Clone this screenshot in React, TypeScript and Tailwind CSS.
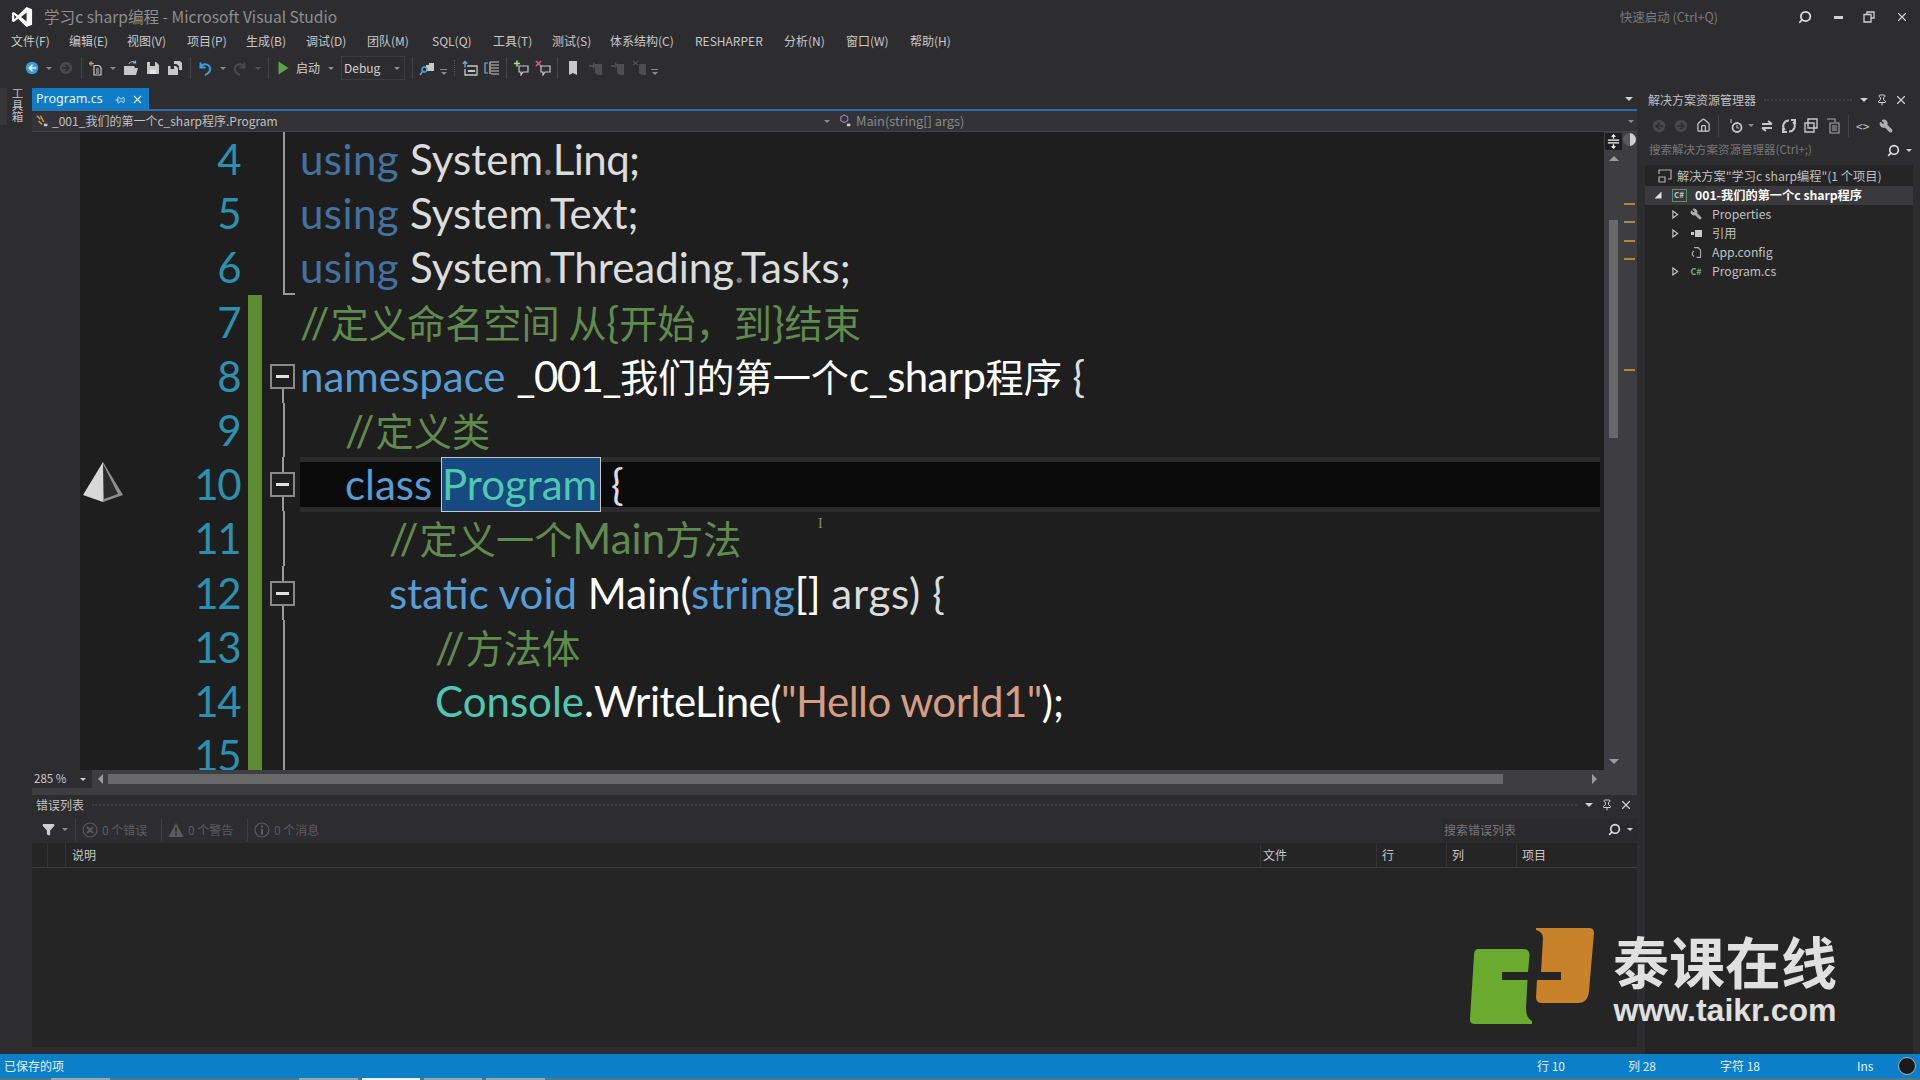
import React from 'react';
import { Search, X, Pin, Filter, Wrench, Home } from 'lucide-react';

const KW = 'text-[#569cd6]';
const DIM = 'text-[#44719f] tracking-[0.4px]';
const TXT = 'text-[#dcdcdc]';
const WHITE = 'text-white';
const GRN = 'text-[#608b4e]';
const TYPE = 'text-[#4ec9b0]';
const STR = 'text-[#d69d85] tracking-[-0.5px]';

type Tok = [string, string, boolean?];

interface CodeLine {
  n: number;
  indent: string;
  gutter: 'line' | 'tick' | 'box' | 'firstbox' | 'none';
  bar: boolean;
  toks: Tok[];
}

const lines: CodeLine[] = [
  { n: 4, indent: 'pl-0', gutter: 'line', bar: false, toks: [['using ', DIM], ['System', TXT], ['.', 'text-[#777777]'], ['Linq;', `${TXT} tracking-[-0.6px]`]] },
  { n: 5, indent: 'pl-0', gutter: 'line', bar: false, toks: [['using ', DIM], ['System', TXT], ['.', 'text-[#777777]'], ['Text;', TXT]] },
  { n: 6, indent: 'pl-0', gutter: 'tick', bar: false, toks: [['using ', DIM], ['System', TXT], ['.', 'text-[#777777]'], ['Threading', TXT], ['.', 'text-[#777777]'], ['Tasks;', TXT]] },
  { n: 7, indent: 'pl-0', gutter: 'none', bar: true, toks: [['//', `${GRN} tracking-[1px]`], ['定义命名空间 从', GRN, true], ['{', GRN], ['开始，到', GRN, true], ['}', GRN], ['结束', GRN, true]] },
  { n: 8, indent: 'pl-0', gutter: 'firstbox', bar: true, toks: [['namespace ', KW], ['_001_', `${WHITE} tracking-[-1.6px]`], ['我们的第一个', WHITE, true], ['c_sharp', `${WHITE} tracking-[-0.6px]`], ['程序', WHITE, true], [' {', TXT]] },
  { n: 9, indent: 'pl-[45px]', gutter: 'line', bar: true, toks: [['//', `${GRN} tracking-[1px]`], ['定义类', GRN, true]] },
  { n: 10, indent: 'pl-[45px]', gutter: 'box', bar: true, toks: [] },
  { n: 11, indent: 'pl-[89px]', gutter: 'line', bar: true, toks: [['//', `${GRN} tracking-[1px]`], ['定义一个', GRN, true], ['Main', GRN], ['方法', GRN, true]] },
  { n: 12, indent: 'pl-[89px]', gutter: 'box', bar: true, toks: [['static void ', KW], ['Main(', WHITE], ['string', KW], ['[] ', WHITE], ['args) {', `${TXT} tracking-[0.7px]`]] },
  { n: 13, indent: 'pl-[135px]', gutter: 'line', bar: true, toks: [['//', `${GRN} tracking-[1px]`], ['方法体', GRN, true]] },
  { n: 14, indent: 'pl-[135px]', gutter: 'line', bar: true, toks: [['Console', TYPE], ['.', WHITE], ['WriteLine(', `${WHITE} tracking-[-0.5px]`], ['"Hello world1"', STR], [');', WHITE]] },
  { n: 15, indent: 'pl-0', gutter: 'line', bar: true, toks: [] },
];

const menus = [
  ['文件(F)', 'w-[58px]'], ['编辑(E)', 'w-[58px]'], ['视图(V)', 'w-[60px]'], ['项目(P)', 'w-[59px]'], ['生成(B)', 'w-[60px]'],
  ['调试(D)', 'w-[61px]'], ['团队(M)', 'w-[65px]'], ['SQL(Q)', 'w-[61px]'], ['工具(T)', 'w-[59px]'], ['测试(S)', 'w-[58px]'],
  ['体系结构(C)', 'w-[85px]'], ['RESHARPER', 'w-[89px]'], ['分析(N)', 'w-[62px]'], ['窗口(W)', 'w-[64px]'], ['帮助(H)', 'w-[50px]'],
];

const Caret = ({ className = '' }: { className?: string }) => (
  <span className={`inline-block w-0 h-0 shrink-0 border-l-[3px] border-r-[3px] border-t-[3px] border-l-transparent border-r-transparent border-t-[#8a8a8a] ${className}`} />
);

const Sep = ({ className = '' }: { className?: string }) => <div className={`w-px h-[22px] shrink-0 bg-[#444447] ${className}`} />;

const Ic = ({ className = '', children }: { className?: string; children: React.ReactNode }) => (
  <svg viewBox="0 0 16 16" className={`w-4 h-4 shrink-0 ${className}`} fill="none">
    {children}
  </svg>
);

const NavCircle = ({ on, dir, className = '' }: { on?: boolean; dir: 'l' | 'r'; className?: string }) => (
  <Ic className={className}>
    <circle cx="8" cy="8" r="6.2" fill={on ? '#3f9bdc' : '#48484b'} />
    <path d={dir === 'l' ? 'M8.5 4.8 5.3 8l3.2 3.2M5.6 8H12' : 'M7.5 4.8 10.7 8l-3.2 3.2M10.4 8H4'} stroke={on ? '#e6f2fb' : '#2d2d30'} strokeWidth="1.6" />
  </Ic>
);

const Overflow = ({ className = '' }: { className?: string }) => (
  <div className={`w-[7px] flex flex-col items-center gap-[2px] shrink-0 ${className}`}>
    <span className="w-[7px] h-px bg-[#8a8a8a]" />
    <Caret />
  </div>
);

const Toolbar = () => (
  <div className="h-[30px] flex items-center pl-[24px] shrink-0">
    <NavCircle on dir="l" />
    <Caret className="ml-[6px]" />
    <NavCircle dir="r" className="ml-[6px]" />
    <Sep className="ml-[7px]" />
    <Ic className="ml-[6px]">
      <path d="M6 5.5h5l2 2V15H6z" stroke="#c8c8c8" strokeWidth="1.2" />
      <path d="M8 9h3M8 11h3M8 13h3" stroke="#c8c8c8" />
      <path d="M3 1v5M1 3.5h5M1.5 2l3 3M4.500 2l-3 3" stroke="#c9a55c" strokeWidth="0.9" />
    </Ic>
    <Caret className="ml-[6px]" />
    <Ic className="ml-[7px]">
      <path d="M1 6h10l1 2h3l-2 7H1z" fill="#c8c8c8" />
      <path d="M6 4c1-2.500 4-3 6-1.500M12.500 0.500v2.500H10" stroke="#7fb6dc" strokeWidth="1.200" />
    </Ic>
    <Ic className="ml-[6px]">
      <path d="M2 2h9l3 3v9H2z" fill="#c8c8c8" />
      <path d="M5 2h5v4H5z" fill="#2d2d30" />
      <path d="M5 9.500h6V14H5z" fill="#e6e6e6" />
    </Ic>
    <Ic className="ml-[6px]">
      <path d="M1 6h8l2 2v7H1z" fill="#c8c8c8" />
      <path d="M7 1h6l2 2v7h-3V6L9.500 4H7z" fill="#c8c8c8" />
      <path d="M3.500 6H7v3H3.500z" fill="#2d2d30" />
    </Ic>
    <Sep className="ml-[7px]" />
    <Ic className="ml-[6px]">
      <path d="M3.500 2.500v5h5M3.800 7.200C5 5 7.500 3.800 10 4.600c3 1 4 4.400 2.500 6.900C11.500 13.200 9.500 14.500 8 15" stroke="#3f9bdc" strokeWidth="2" />
    </Ic>
    <Caret className="ml-[7px]" />
    <Ic className="ml-[6px]">
      <path d="M12.500 2.500v5h-5M12.200 7.200C11 5 8.500 3.800 6 4.600c-3 1-4 4.400-2.500 6.900C4.500 13.200 6.500 14.500 8 15" stroke="#4a4a4d" strokeWidth="2" />
    </Ic>
    <Caret className="ml-[7px] !border-t-[#555558]" />
    <Sep className="ml-[7px]" />
    <Ic className="ml-[6px]">
      <path d="M3.500 1.500 13.500 8l-10 6.500z" fill="#57a64a" />
    </Ic>
    <span className="ml-[5px] text-[12px] text-[#d0d0d0] w-[26px]">启动</span>
    <Caret className="ml-[6px]" />
    <div className="ml-[7px] w-[64px] h-[24px] flex items-center justify-between pl-[2px] pr-[4px] border border-[#3c3c3f] bg-[#2d2d30] text-[12px] text-[#d0d0d0]">
      <span>Debug</span>
      <Caret />
    </div>
    <Sep className="ml-[7px]" />
    <Ic className="ml-[6px]">
      <path d="M7 5h3V3h5v8H7z" fill="#c8c8c8" />
      <circle cx="5.500" cy="9.500" r="2.500" stroke="#5ba4d8" strokeWidth="1.300" />
      <path d="M3.500 11.500 1 15" stroke="#5ba4d8" strokeWidth="1.600" />
    </Ic>
    <Overflow className="ml-[5px] mt-[8px]" />
    <div className="ml-[7px] h-[16px] border-l border-dotted border-[#555558]" />
    <Ic className="ml-[7px]">
      <path d="M3 1.500v6M0.800 3.800 3 1.500l2.200 2.300" stroke="#6ab0e0" strokeWidth="1.300" />
      <path d="M5 6h10v9H3V9" stroke="#c8c8c8" strokeWidth="1.300" />
      <path d="M6 10h7v2H6z" fill="#c8c8c8" />
    </Ic>
    <Ic className="ml-[6px]">
      <path d="M4 3H1v10h3" stroke="#6ab0e0" strokeWidth="1.200" />
      <path d="M6 2h9M7 5h8M7 8h8M7 11h8M7 14h8M6 2v12" stroke="#c8c8c8" strokeWidth="1.200" />
    </Ic>
    <Sep className="ml-[6px]" />
    <Ic className="ml-[6px]">
      <path d="M1 3.500h6M4 0.500v6" stroke="#a8d8a0" strokeWidth="1.600" />
      <path d="M6 6h9v6h-5l-2 3v-3H6z" stroke="#c8c8c8" strokeWidth="1.200" />
    </Ic>
    <Ic className="ml-[6px]">
      <path d="M1 1l5 5M6 1 1 6" stroke="#e05a7c" strokeWidth="1.600" />
      <path d="M6 6h9v6h-5l-2 3v-3H6z" stroke="#c8c8c8" strokeWidth="1.200" />
    </Ic>
    <Sep className="ml-[6px]" />
    <Ic className="ml-[7px]">
      <path d="M4 1h8v14l-4-2-4 2z" fill="#c8c8c8" />
    </Ic>
    <Ic className="ml-[7px]">
      <path d="M7 4h7v11H10l-3-2z" fill="#4e4e51" />
      <path d="M8 5 5 2v3H1v2h4v3z" fill="#4e4e51" />
    </Ic>
    <Ic className="ml-[6px]">
      <path d="M7 4h7v11H10l-3-2z" fill="#4e4e51" />
      <path d="M1 5h4V2l3 3-3 4V7H1z" fill="#4e4e51" />
    </Ic>
    <Ic className="ml-[6px]">
      <path d="M7 4h7v11H10l-3-2z" fill="#4e4e51" />
      <path d="M1 1l5 4M6 1 1 5" stroke="#4e4e51" strokeWidth="1.500" />
    </Ic>
    <Overflow className="ml-[3px] mt-[8px]" />
  </div>
);

const VsLogo = () => (
  <svg viewBox="0 0 24 24" className="w-[22px] h-[22px] shrink-0" fill="#ffffff" fillRule="evenodd">
    <path d="M17 1 7.800 10.200 3 6.500 1 7.500v9l2 1 4.800-3.700L17 23l6-2.500v-17zM17 7v10l-6-5zM3.500 9.500 6 12l-2.500 2.500z" />
  </svg>
);

const PaneHead = ({ title }: { title: string }) => (
  <div className="flex items-center h-[20px]">
    <span className="text-[12px] text-[#c0c0c0] whitespace-nowrap">{title}</span>
    <div className="flex-1 mx-[8px] border-t-2 border-dotted border-[#3f3f42]" />
    <Caret className="!border-t-[#d0d0d0] !border-l-[4px] !border-r-[4px] !border-t-[4px]" />
    <Pin size={12} className="ml-[8px] text-[#d0d0d0]" />
    <X size={14} className="ml-[6px] text-[#d0d0d0]" />
  </div>
);

const Gutter = ({ kind }: { kind: CodeLine['gutter'] }) => {
  if (kind === 'none') return <div className="w-[38px] shrink-0" />;
  if (kind === 'box' || kind === 'firstbox') {
    return (
      <div className="w-[38px] h-full shrink-0 flex flex-col justify-center pl-[8px]">
        <div className={`h-[15px] w-[14px] shrink-0 ${kind === 'box' ? 'border-r-2 border-[#9a9a9a]' : ''}`} />
        <div className="w-[25px] h-[25px] border-2 border-[#8a8a8a] flex items-center justify-center shrink-0">
          <span className="w-[13px] h-[3px] bg-[#e0e0e0]" />
        </div>
        <div className="flex-1 w-[14px] border-r-2 border-[#9a9a9a]" />
      </div>
    );
  }
  if (kind === 'tick') {
    return <div className="w-[38px] h-full shrink-0 pl-[21px]"><div className="w-[12px] h-full border-l-2 border-b-2 border-[#9a9a9a]" /></div>;
  }
  return <div className="w-[38px] h-full shrink-0 pl-[21px]"><div className="w-[2px] h-full bg-[#9a9a9a]" /></div>;
};

const Tokens = ({ toks }: { toks: Tok[] }) => (
  <span className="whitespace-pre">
    {toks.map(([t, c, cjk], i) => (
      <span key={i} className={cjk ? `${c} text-[38.2px] font-['Noto_Sans_CJK_SC',sans-serif]` : c}>{t}</span>
    ))}
  </span>
);

const Editor = () => (
  <div className="relative h-[638px] flex bg-[#1e1e1e] overflow-hidden shrink-0">
    <div className="w-[48px] bg-[#2d2d30] shrink-0" />
    <div className="flex-1 flex flex-col min-w-0">
      {lines.map(l => (
        <div key={l.n} className="h-[54.2px] shrink-0 flex items-center text-[42px] leading-none font-['Lato','Noto_Sans_CJK_SC',sans-serif]">
          <div className="w-[160px] text-right text-[#2b91af] tracking-[-1.5px] shrink-0">{l.n}</div>
          <div className="w-[8px] shrink-0" />
          <div className={`w-[14px] h-full shrink-0 ${l.bar ? 'bg-[#5d8a33]' : ''}`} />
          <Gutter kind={l.gutter} />
          {l.n === 10 ? (
            <div className={`flex-1 h-[55px] flex items-center bg-[#0b0b0b] border-y-[5px] border-[#2b2b2c] mr-[4px] ${l.indent}`}>
              <span className={`${KW} whitespace-pre w-[96px]`}>class</span>
              <span className={`h-[55px] flex items-center shrink-0 w-[160px] bg-[#174a80] border border-[#c8c8c8] ${TYPE}`}>Program</span>
              <span className={`${TXT} ml-[10px]`}>{'{'}</span>
            </div>
          ) : (
            <div className={`flex-1 ${l.indent}`}><Tokens toks={l.toks} /></div>
          )}
        </div>
      ))}
    </div>
    <div className="w-[33px] shrink-0 bg-[#3e3e42] flex">
      <div className="w-[20px] flex flex-col items-center">
        <div className="w-[17px] h-[17px] mt-px bg-[#1e1e1e] flex items-center justify-center">
          <svg viewBox="0 0 16 16" className="w-[15px] h-[15px]" fill="none" stroke="#ffffff" strokeWidth="1.300">
            <path d="M2 6.500h12M2 9.500h12M8 1v4M8 11v4" />
            <path d="M6 3l2-2 2 2M6 13l2 2 2-2" />
          </svg>
        </div>
        <span className="mt-[6px] w-0 h-0 border-l-[5px] border-r-[5px] border-b-[5px] border-l-transparent border-r-transparent border-b-[#9a9a9a]" />
        <div className="mt-[59px] w-[9px] h-[218px] bg-[#686868]" />
        <span className="mt-auto mb-[6px] w-0 h-0 border-l-[5px] border-r-[5px] border-t-[5px] border-l-transparent border-r-transparent border-t-[#9a9a9a]" />
      </div>
      <div className="flex-1 flex flex-col items-center pr-[1px]">
        <span className="mt-[1px] w-[13px] h-[13px] rounded-full bg-[linear-gradient(90deg,#5a5a5a_50%,#d0d0d0_50%)]" />
        <span className="mt-[57px] w-[11px] h-[2px] bg-[#b5862a]" />
        <span className="mt-[16px] w-[11px] h-[2px] bg-[#a08a60]" />
        <span className="mt-[17px] w-[11px] h-[2px] bg-[#b5862a]" />
        <span className="mt-[16px] w-[11px] h-[2px] bg-[#b5862a]" />
        <span className="mt-[109px] w-[11px] h-[2px] bg-[#b5862a]" />
      </div>
    </div>
    {/* pyramid glyph in the margin */}
    <svg viewBox="0 0 40 40" className="absolute left-[51px] top-[330px] w-[40px] h-[40px]">
      <path d="M20 0 0 33l20 7z" fill="#d8d8d8" />
      <path d="M20 0 40 33 20 40z" fill="#8f8f8f" />
      <path d="M20 2 35 32 21 37z" fill="#2b2b2b" />
    </svg>
    <span className="absolute left-[786px] top-[381px] text-[14px] text-[#888888] font-['Liberation_Serif',serif]">I</span>
  </div>
);

const ErrChip = ({ icon, label, w }: { icon: React.ReactNode; label: string; w: string }) => (
  <div className={`flex items-center h-[22px] ${w} pl-[6px] border-r border-[#3f3f42] text-[12px] text-[#5c5c5f]`}>
    {icon}
    <span className="ml-[4px]">{label}</span>
  </div>
);

const ErrorList = () => (
  <div className="flex-1 flex flex-col min-h-0">
    <div className="h-[21px] pl-[4px] pr-[4px] pb-[2px] flex items-center shrink-0"><div className="flex-1"><PaneHead title="错误列表" /></div></div>
    <div className="h-[27px] flex items-center shrink-0 pl-[10px]">
      <Filter size={13} className="text-[#d0d0d0] fill-[#d0d0d0]" />
      <Caret className="ml-[7px] mr-[7px]" />
      <div className="w-px h-[22px] bg-[#3f3f42]" />
      <ErrChip w="w-[86px]" label="0 个错误" icon={<Ic><circle cx="8" cy="8" r="7" stroke="#5c5c5f" strokeWidth="1.200" /><path d="M5 5l6 6M11 5l-6 6" stroke="#5c5c5f" strokeWidth="1.800" /></Ic>} />
      <ErrChip w="w-[86px]" label="0 个警告" icon={<Ic><path d="M8 1 15.500 15H.5z" fill="#5c5c5f" /><path d="M8 5.500v5M8 11.500v2" stroke="#2d2d30" strokeWidth="1.600" /></Ic>} />
      <ErrChip w="w-[86px] !border-r-0" label="0 个消息" icon={<Ic><circle cx="8" cy="8" r="7" stroke="#5c5c5f" strokeWidth="1.200" /><path d="M8 3.500v2M8 7v5.500" stroke="#5c5c5f" strokeWidth="2" /></Ic>} />
      <div className="ml-auto w-[195px] h-[24px] flex items-center pl-[2px] pr-[4px] text-[12px] text-[#777777] bg-[#2a2a2c]">
        <span>搜索错误列表</span>
        <Search size={13} strokeWidth={3} className="ml-auto text-[#e0e0e0] -scale-x-100" />
        <Caret className="ml-[6px] !border-t-[#d0d0d0]" />
      </div>
    </div>
    <div className="h-[25px] flex items-center bg-[#252526] border-b border-[#3f3f42] text-[12px] text-[#c8c8c8] shrink-0">
      <div className="w-[16px] h-full border-r border-[#333336]" />
      <div className="w-[18px] h-full border-r border-[#333336]" />
      <div className="w-[1195px] h-full pl-[6px] flex items-center border-r border-[#333336]">说明</div>
      <div className="w-[116px] h-full pl-[2px] flex items-center border-r border-[#333336]">文件</div>
      <div className="w-[70px] h-full pl-[5px] flex items-center border-r border-[#333336]">行</div>
      <div className="w-[70px] h-full pl-[5px] flex items-center border-r border-[#333336]">列</div>
      <div className="flex-1 h-full pl-[5px] flex items-center">项目</div>
    </div>
    <div className="flex-1 bg-[#252526]" />
  </div>
);

const TreeRow = ({ pl, arrow, icon, label, sel, bold }: { pl: string; arrow?: 'open' | 'closed'; icon: React.ReactNode; label: string; sel?: boolean; bold?: boolean }) => (
  <div className={`h-[19px] flex items-center text-[12.2px] ${pl} ${sel ? 'bg-[#3a3a3e]' : ''} ${bold ? 'font-bold text-white' : 'text-[#c0c0c0]'}`}>
    <span className="w-[14px] flex justify-center shrink-0">
      {arrow === 'closed' && (
        <svg viewBox="0 0 8 10" className="w-[7px] h-[9px]" fill="none" stroke="#c8c8c8" strokeWidth="1.300"><path d="M1 1l5.500 4L1 9z" /></svg>
      )}
      {arrow === 'open' && <span className="w-[7px] h-[7px] bg-[#e0e0e0] [clip-path:polygon(100%_0,100%_100%,0_100%)]" />}
    </span>
    <span className="ml-[6px] w-[16px] flex justify-center shrink-0">{icon}</span>
    <span className="ml-[8px] whitespace-nowrap">{label}</span>
  </div>
);

const SolutionPane = () => (
  <div className="w-[275px] shrink-0 flex flex-col">
    <div className="pl-[3px] pr-[12px] mt-[7px]"><PaneHead title="解决方案资源管理器" /></div>
    <div className="h-[25px] mt-[3px] flex items-center pl-[6px]">
      <NavCircle dir="l" />
      <NavCircle dir="r" className="ml-[6px]" />
      <Home size={15} className="ml-[7px] text-[#c8c8c8]" />
      <Sep className="ml-[7px]" />
      <Ic className="ml-[9px]"><circle cx="9" cy="9.500" r="4.500" stroke="#c8c8c8" strokeWidth="1.800" /><path d="M9 7v3h2M3 1v4" stroke="#c8c8c8" /></Ic>
      <Caret className="ml-[4px]" />
      <Ic className="ml-[5px]"><path d="M3 6h10M9 3l4 3M13 10H3M7 13l-4-3" stroke="#c8c8c8" strokeWidth="1.800" /></Ic>
      <Ic className="ml-[6px]"><path d="M8 2.500A5.500 5.500 0 0 0 4 12M8 13.500A5.500 5.500 0 0 0 12 4M6 14H2v-4M10 2h4v4" stroke="#c8c8c8" strokeWidth="2" /></Ic>
      <Ic className="ml-[6px]"><path d="M5 1h9v9H5zM2 5h9v9H2z" stroke="#c8c8c8" strokeWidth="1.400" /></Ic>
      <Ic className="ml-[6px]"><path d="M2 1h8v3M5 5h9v10H5zM7 8h5M7 10h5M7 12h5" stroke="#a8a8a8" strokeWidth="1.100" /></Ic>
      <Sep className="ml-[7px]" />
      <span className="ml-[7px] text-[12px] text-[#c8c8c8] w-[16px]">{'<>'}</span>
      <Wrench size={14} className="ml-[7px] text-[#b0b0b0] fill-[#b0b0b0] -scale-x-100" />
    </div>
    <div className="h-[24px] flex items-center pl-[4px] pr-[8px] text-[11.5px] text-[#767676]">
      <span>搜索解决方案资源管理器(Ctrl+;)</span>
      <Search size={13} strokeWidth={3} className="ml-auto text-[#e0e0e0] -scale-x-100" />
      <Caret className="ml-[6px] !border-t-[#d0d0d0]" />
    </div>
    <div className="flex-1 mt-[3px] mr-[7px] bg-[#252526] pt-[1.5px]">
      <div className="h-[19px] flex items-center pl-[12px] text-[12.2px] text-[#c0c0c0]">
        <Ic><path d="M2 6V2h12v9h-3M2 9v5h6V9z" stroke="#b0b0b0" strokeWidth="1.200" /></Ic>
        <span className="ml-[4px] whitespace-nowrap">解决方案"学习c sharp编程"(1 个项目)</span>
      </div>
      <TreeRow sel bold pl="pl-[6px]" arrow="open" label="001-我们的第一个c sharp程序"
        icon={<span className="w-[15px] h-[13px] border border-[#5f8f6a] flex items-center justify-center text-[8px] font-bold text-[#c8c8c8] leading-none">C#</span>} />
      <TreeRow pl="pl-[23px]" arrow="closed" label="Properties" icon={<Wrench size={12} className="text-[#b0b0b0] fill-[#b0b0b0] -scale-x-100" />} />
      <TreeRow pl="pl-[23px]" arrow="closed" label="引用" icon={<span className="flex items-center gap-[1px]"><span className="w-[3px] h-[3px] bg-[#c8c8c8]" /><span className="w-[7px] h-[7px] bg-[#c8c8c8]" /></span>} />
      <TreeRow pl="pl-[23px]" label="App.config" icon={<Ic className="!w-[13px] !h-[13px]"><path d="M5 2h5l3 3v9H8M5 6 3 8v3l2 2" stroke="#b0b0b0" strokeWidth="1.300" /></Ic>} />
      <TreeRow pl="pl-[23px]" arrow="closed" label="Program.cs" icon={<span className="text-[9px] font-bold text-[#6fb36f] leading-none">C#</span>} />
    </div>
  </div>
);

const Logo = () => (
  <div className="absolute left-[1470px] top-[928px] flex items-start">
    <svg viewBox="0 0 124 96" className="w-[124px] h-[96px] shrink-0">
      <path d="M8 21H53Q60 21 59.500 28L58 44H32V52H57.500L56 80Q56 90 62 93V96H5Q-1 96 0 90L4 28Q4 21 8 21Z" fill="#6aaa2e" />
      <path d="M66 0H119Q124 0 124 5L119 63Q118 75 108 75H72Q66 75 66 69L67 52H91V44H71L73 10Q73 4 66 2Z" fill="#c8822a" />
    </svg>
    <div className="ml-[19px] mt-[1px] flex flex-col items-center text-[#e0e0e0]">
      <span className="text-[56px] leading-[62px] font-bold whitespace-nowrap font-['Noto_Sans_CJK_SC',sans-serif]">泰课在线</span>
      <span className="text-[32px] leading-[38px] font-bold whitespace-nowrap font-['Liberation_Sans',sans-serif]">www.taikr.com</span>
    </div>
  </div>
);

export default function App() {
  return (
    <div className="relative w-[1920px] h-[1080px] overflow-hidden flex flex-col bg-[#2d2d30] font-['Noto_Sans_CJK_SC','Noto_Sans',sans-serif] text-[#c8c8c8]">
      {/* title bar */}
      <div className="h-[30px] flex items-center pl-[11px] pt-[4px] shrink-0">
        <VsLogo />
        <span className="ml-[11px] text-[15.6px] text-[#8e8e90] whitespace-nowrap">学习c sharp编程 - Microsoft Visual Studio</span>
        <span className="ml-auto text-[12.5px] text-[#7a7a7c]">快速启动 (Ctrl+Q)</span>
        <Search size={14} strokeWidth={3} className="ml-[80px] text-[#e0e0e0] -scale-x-100" />
        <span className="ml-[22px] w-[9px] h-[3px] bg-[#d0d0d0]" />
        <svg viewBox="0 0 12 12" className="ml-[20px] w-[12px] h-[12px]" fill="none" stroke="#d0d0d0" strokeWidth="1.300"><path d="M4 3V1h7v6H8.500M1 3.500h7v7.500H1z" /></svg>
        <X size={14} className="ml-[20px] mr-[11px] text-[#d0d0d0]" />
      </div>
      {/* menu */}
      <div className="h-[22px] flex items-center pl-[11px] text-[12px] text-[#c8c8c8] shrink-0">
        {menus.map(([m, w]) => <span key={m} className={`${w} whitespace-nowrap`}>{m}</span>)}
      </div>
      <div className="h-px shrink-0" />
      <Toolbar />

      <div className="flex-1 flex min-h-0">
        {/* toolbox rail */}
        <div className="w-[32px] shrink-0 pt-[5px] flex items-start">
          <div className="w-[7px] h-[37px] bg-[#37373a]" />
          <span className="ml-[4px] h-[37px] text-[11.5px] text-[#c0c0c0] [writing-mode:vertical-rl] leading-none">工具箱</span>
        </div>
        {/* document + error list */}
        <div className="w-[1605px] shrink-0 flex flex-col pt-[5px]">
          <div className="h-[21px] flex items-stretch shrink-0">
            <div className="w-[117px] bg-[#0e7cc6] flex items-center pl-[4px] pt-[2px] text-[12.5px] text-[#e8f3fb]">
              <span className="font-['Noto_Sans',sans-serif]">Program.cs</span>
              <Pin size={10} className="ml-[12px] rotate-90" />
              <X size={13} className="ml-[6px]" />
            </div>
            <div className="flex-1 flex items-center justify-end pr-[4px]"><Caret className="!border-t-[#d0d0d0] !border-l-[4px] !border-r-[4px] !border-t-[4px]" /></div>
          </div>
          <div className="h-[2px] bg-[#2a70ad] shrink-0" />
          <div className="h-[21px] bg-[#333337] border-b border-[#444447] flex items-center pl-[4px] text-[12px] text-[#c0c0c0] shrink-0">
            <Ic className="!w-[14px] !h-[14px]"><path d="M1 2l4 4M5 2l4 7M3 8l4 4" stroke="#d0a050" strokeWidth="1.600" /><path d="M9 11h4v3H9z" fill="#c8c8c8" /></Ic>
            <span className="ml-[2px] w-[778px] shrink-0 flex items-center whitespace-nowrap">
              <span>_001_我们的第一个c_sharp程序.Program</span>
              <Caret className="ml-auto" />
            </span>
            <Ic className="ml-[9px] !w-[14px] !h-[14px]"><path d="M6 1l4 2.500v4L6 10 2 7.500v-4z" stroke="#a67fc4" strokeWidth="1.200" /><path d="M9 11h4v3H9z" fill="#c8c8c8" /></Ic>
            <span className="ml-[3px] text-[12.8px] text-[#8a8a8c] whitespace-nowrap">Main(string[] args)</span>
            <Caret className="ml-auto mr-[3px]" />
          </div>
          <Editor />
          <div className="h-[22px] bg-[#3e3e42] flex items-center pb-[4px] shrink-0">
            <div className="w-[60px] h-[18px] bg-[#2d2d30] flex items-center pl-[2px] pr-[6px] justify-between text-[11.5px] text-[#c8c8c8]"><span>285 %</span><Caret className="!border-t-[#d0d0d0]" /></div>
            <span className="ml-[6px] w-0 h-0 border-y-[5px] border-r-[5px] border-y-transparent border-r-[#9a9a9a]" />
            <div className="ml-[5px] w-[1395px] h-[10px] bg-[#686868]" />
            <span className="ml-[89px] w-0 h-0 border-y-[5px] border-l-[5px] border-y-transparent border-l-[#9a9a9a]" />
          </div>
          <div className="h-[3px] bg-[#3e3e42] shrink-0" />
          <ErrorList />
          <div className="h-[7px] shrink-0" />
        </div>
        <div className="w-[8px] shrink-0" />
        <SolutionPane />
      </div>

      {/* status bar */}
      <div className="h-[24px] bg-[#0c7fc9] flex items-center pl-[4px] text-[12px] text-[#e4f1fa] shrink-0">
        <span>已保存的项</span>
        <span className="ml-auto w-[91px]">行 10</span>
        <span className="w-[92px]">列 28</span>
        <span className="w-[137px]">字符 18</span>
        <span className="w-[41px]">Ins</span>
        <span className="w-[18px] h-[18px] mr-[4px] rounded-full bg-[#1a1a1c] border border-[#b0b0b0]" />
      </div>
      {/* strip of the taskbar under the recording */}
      <div className="h-[2px] flex bg-[#4a7a88] shrink-0">
        <span className="ml-[51px] w-[59px] bg-[#9aa8ac]" />
        <span className="ml-[189px] w-[59px] bg-[#9aa8ac]" />
        <span className="ml-[4px] w-[58px] bg-[#f0f0f0]" />
        <span className="ml-[4px] w-[58px] bg-[#9aa8ac]" />
        <span className="ml-[4px] w-[59px] bg-[#9aa8ac]" />
      </div>
      <Logo />
    </div>
  );
}
